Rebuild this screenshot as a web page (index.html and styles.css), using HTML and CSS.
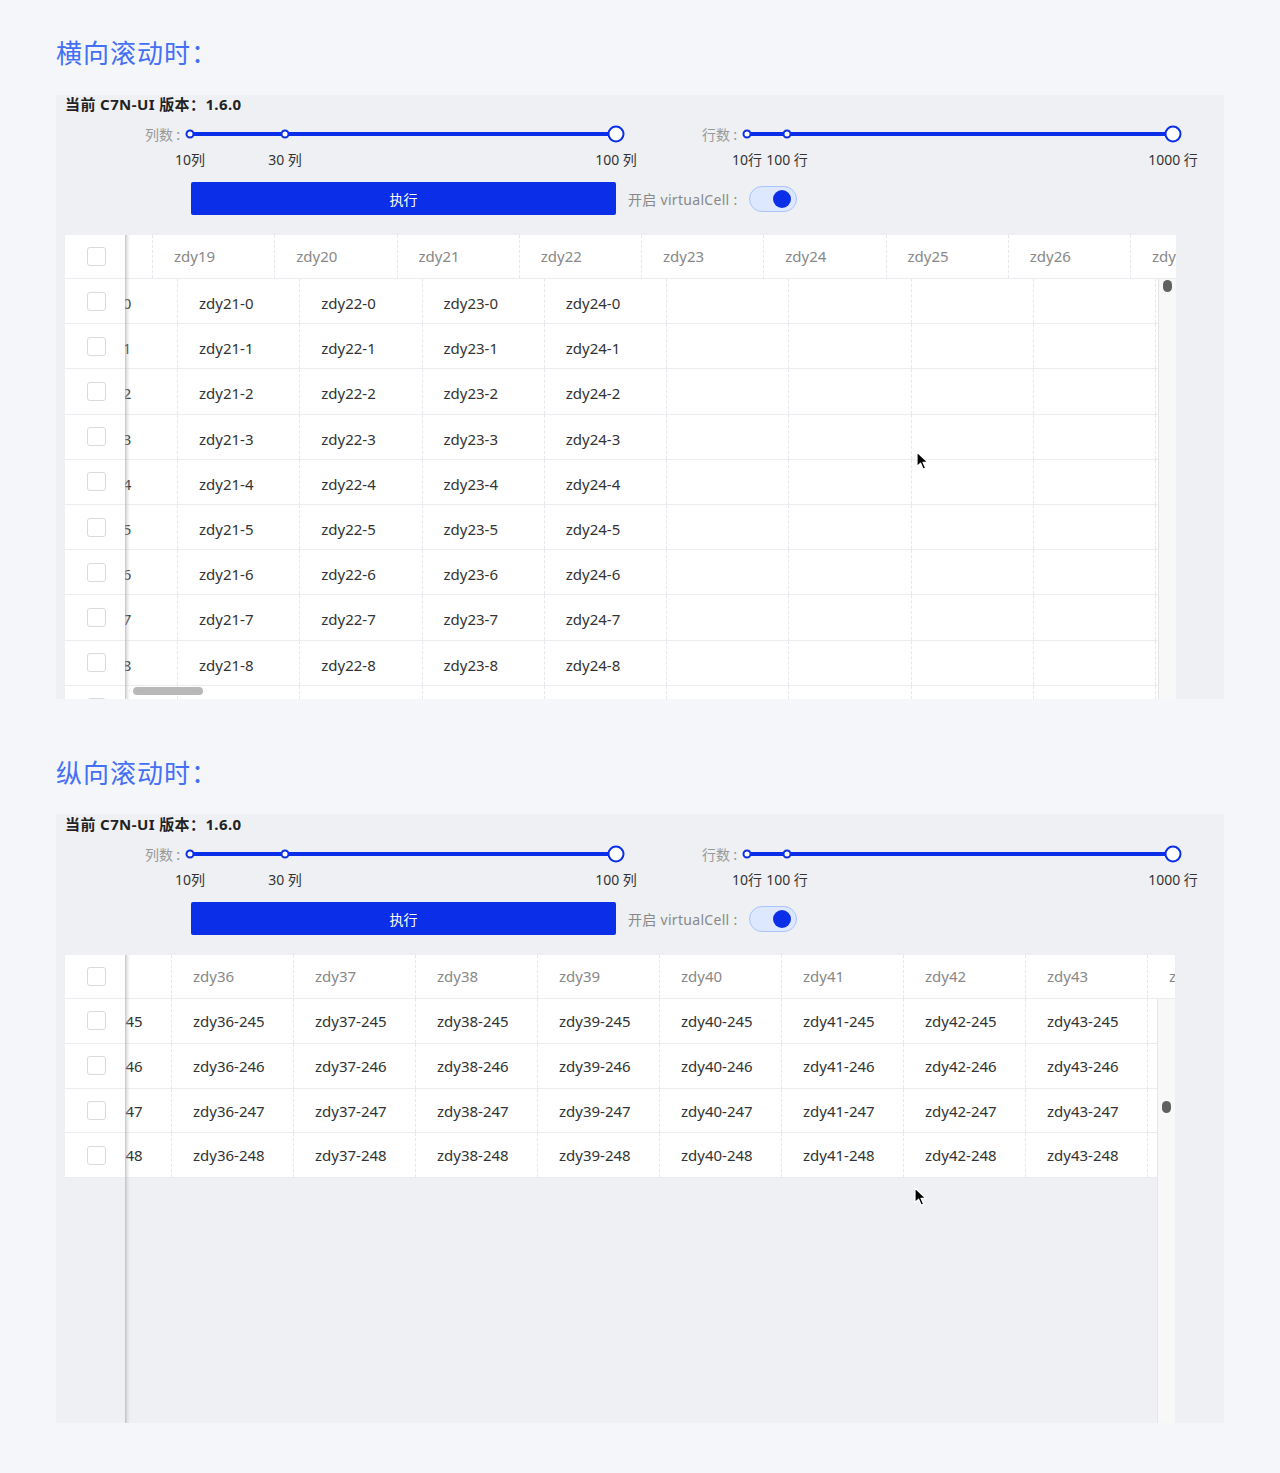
FILE: index.html
```html
<!DOCTYPE html>
<html lang="zh-CN">
<head>
<meta charset="utf-8">
<title>virtualCell</title>
<link rel="stylesheet" href="styles.css">
</head>
<body>
<div class="page">
  <h2 class="title">横向滚动时：</h2>
  <div class="panel p1">
    <div class="version">当前 C7N-UI 版本：1.6.0</div>
    <div class="sliders">
      <div class="sgroup">
        <span class="slabel">列数 :</span>
        <div class="track">
          <div class="line"></div>
          <span class="dot d-c0"></span><span class="dot d-c1"></span><span class="dot big d-end"></span>
          <span class="mark d-c0">10列</span><span class="mark d-c1">30 列</span><span class="mark d-end">100 列</span>
        </div>
      </div>
      <div class="sgroup sg2">
        <span class="slabel">行数 :</span>
        <div class="track">
          <div class="line"></div>
          <span class="dot d-r0"></span><span class="dot d-r1"></span><span class="dot big d-end"></span>
          <span class="mark d-r0">10行</span><span class="mark d-r1">100 行</span><span class="mark d-end">1000 行</span>
        </div>
      </div>
    </div>
    <div class="actions">
      <button class="run">执行</button>
      <span class="vc-label">开启 virtualCell :</span>
      <span class="switch"><span class="knob"></span></span>
    </div>
    <div class="table t1">
      <div class="fixed">
        <div class="fh"><span class="cb"></span></div>
        <div class="fr"><span class="cb"></span></div>
        <div class="fr"><span class="cb"></span></div>
        <div class="fr"><span class="cb"></span></div>
        <div class="fr"><span class="cb"></span></div>
        <div class="fr"><span class="cb"></span></div>
        <div class="fr"><span class="cb"></span></div>
        <div class="fr"><span class="cb"></span></div>
        <div class="fr"><span class="cb"></span></div>
        <div class="fr"><span class="cb"></span></div>
        <div class="fr"><span class="cb"></span></div>
      </div>
      <div class="scroll">
        <div class="head">
          <div class="head-inner off-h1">
            <div class="hc">zdy18</div><div class="hc">zdy19</div><div class="hc">zdy20</div><div class="hc">zdy21</div><div class="hc">zdy22</div><div class="hc">zdy23</div><div class="hc">zdy24</div><div class="hc">zdy25</div><div class="hc">zdy26</div><div class="hc">zdy27</div>
          </div>
        </div>
        <div class="bodywrap">
          <div class="rows">
            <div class="row"><div class="row-inner off-b1"><div class="bc">zdy20-0</div><div class="bc">zdy21-0</div><div class="bc">zdy22-0</div><div class="bc">zdy23-0</div><div class="bc">zdy24-0</div><div class="bc"></div><div class="bc"></div><div class="bc"></div><div class="bc"></div></div></div>
            <div class="row"><div class="row-inner off-b1"><div class="bc">zdy20-1</div><div class="bc">zdy21-1</div><div class="bc">zdy22-1</div><div class="bc">zdy23-1</div><div class="bc">zdy24-1</div><div class="bc"></div><div class="bc"></div><div class="bc"></div><div class="bc"></div></div></div>
            <div class="row"><div class="row-inner off-b1"><div class="bc">zdy20-2</div><div class="bc">zdy21-2</div><div class="bc">zdy22-2</div><div class="bc">zdy23-2</div><div class="bc">zdy24-2</div><div class="bc"></div><div class="bc"></div><div class="bc"></div><div class="bc"></div></div></div>
            <div class="row"><div class="row-inner off-b1"><div class="bc">zdy20-3</div><div class="bc">zdy21-3</div><div class="bc">zdy22-3</div><div class="bc">zdy23-3</div><div class="bc">zdy24-3</div><div class="bc"></div><div class="bc"></div><div class="bc"></div><div class="bc"></div></div></div>
            <div class="row"><div class="row-inner off-b1"><div class="bc">zdy20-4</div><div class="bc">zdy21-4</div><div class="bc">zdy22-4</div><div class="bc">zdy23-4</div><div class="bc">zdy24-4</div><div class="bc"></div><div class="bc"></div><div class="bc"></div><div class="bc"></div></div></div>
            <div class="row"><div class="row-inner off-b1"><div class="bc">zdy20-5</div><div class="bc">zdy21-5</div><div class="bc">zdy22-5</div><div class="bc">zdy23-5</div><div class="bc">zdy24-5</div><div class="bc"></div><div class="bc"></div><div class="bc"></div><div class="bc"></div></div></div>
            <div class="row"><div class="row-inner off-b1"><div class="bc">zdy20-6</div><div class="bc">zdy21-6</div><div class="bc">zdy22-6</div><div class="bc">zdy23-6</div><div class="bc">zdy24-6</div><div class="bc"></div><div class="bc"></div><div class="bc"></div><div class="bc"></div></div></div>
            <div class="row"><div class="row-inner off-b1"><div class="bc">zdy20-7</div><div class="bc">zdy21-7</div><div class="bc">zdy22-7</div><div class="bc">zdy23-7</div><div class="bc">zdy24-7</div><div class="bc"></div><div class="bc"></div><div class="bc"></div><div class="bc"></div></div></div>
            <div class="row"><div class="row-inner off-b1"><div class="bc">zdy20-8</div><div class="bc">zdy21-8</div><div class="bc">zdy22-8</div><div class="bc">zdy23-8</div><div class="bc">zdy24-8</div><div class="bc"></div><div class="bc"></div><div class="bc"></div><div class="bc"></div></div></div>
            <div class="row"><div class="row-inner off-b1"><div class="bc"></div><div class="bc"></div><div class="bc"></div><div class="bc"></div><div class="bc"></div><div class="bc"></div><div class="bc"></div><div class="bc"></div><div class="bc"></div></div></div>
            <span class="hthumb"></span>
          </div>
          <div class="vbar"><span class="vthumb th1"></span></div>
        </div>
      </div>
    </div>
    <svg class="cursor c1" width="14" height="20" viewBox="0 0 14 20"><path d="M1 1 L1 15.5 L4.6 12.2 L7.2 18.2 L9.6 17.1 L7 11.3 L11.8 11.3 Z" fill="#000" stroke="#fff" stroke-width="1.2" stroke-linejoin="round"/></svg>
  </div>

  <h2 class="title t2">纵向滚动时：</h2>
  <div class="panel p2">
    <div class="version">当前 C7N-UI 版本：1.6.0</div>
    <div class="sliders">
      <div class="sgroup">
        <span class="slabel">列数 :</span>
        <div class="track">
          <div class="line"></div>
          <span class="dot d-c0"></span><span class="dot d-c1"></span><span class="dot big d-end"></span>
          <span class="mark d-c0">10列</span><span class="mark d-c1">30 列</span><span class="mark d-end">100 列</span>
        </div>
      </div>
      <div class="sgroup sg2">
        <span class="slabel">行数 :</span>
        <div class="track">
          <div class="line"></div>
          <span class="dot d-r0"></span><span class="dot d-r1"></span><span class="dot big d-end"></span>
          <span class="mark d-r0">10行</span><span class="mark d-r1">100 行</span><span class="mark d-end">1000 行</span>
        </div>
      </div>
    </div>
    <div class="actions">
      <button class="run">执行</button>
      <span class="vc-label">开启 virtualCell :</span>
      <span class="switch"><span class="knob"></span></span>
    </div>
    <div class="table t2">
      <div class="fixed">
        <div class="fh"><span class="cb"></span></div>
        <div class="fr"><span class="cb"></span></div>
        <div class="fr"><span class="cb"></span></div>
        <div class="fr"><span class="cb"></span></div>
        <div class="fr"><span class="cb"></span></div>
      </div>
      <div class="scroll">
        <div class="head">
          <div class="head-inner off-2">
            <div class="hc">zdy35</div><div class="hc">zdy36</div><div class="hc">zdy37</div><div class="hc">zdy38</div><div class="hc">zdy39</div><div class="hc">zdy40</div><div class="hc">zdy41</div><div class="hc">zdy42</div><div class="hc">zdy43</div><div class="hc">zdy44</div>
          </div>
        </div>
        <div class="bodywrap">
          <div class="rows">
            <div class="row"><div class="row-inner off-2"><div class="bc">zdy35-245</div><div class="bc">zdy36-245</div><div class="bc">zdy37-245</div><div class="bc">zdy38-245</div><div class="bc">zdy39-245</div><div class="bc">zdy40-245</div><div class="bc">zdy41-245</div><div class="bc">zdy42-245</div><div class="bc">zdy43-245</div><div class="bc"></div></div></div>
            <div class="row"><div class="row-inner off-2"><div class="bc">zdy35-246</div><div class="bc">zdy36-246</div><div class="bc">zdy37-246</div><div class="bc">zdy38-246</div><div class="bc">zdy39-246</div><div class="bc">zdy40-246</div><div class="bc">zdy41-246</div><div class="bc">zdy42-246</div><div class="bc">zdy43-246</div><div class="bc"></div></div></div>
            <div class="row"><div class="row-inner off-2"><div class="bc">zdy35-247</div><div class="bc">zdy36-247</div><div class="bc">zdy37-247</div><div class="bc">zdy38-247</div><div class="bc">zdy39-247</div><div class="bc">zdy40-247</div><div class="bc">zdy41-247</div><div class="bc">zdy42-247</div><div class="bc">zdy43-247</div><div class="bc"></div></div></div>
            <div class="row"><div class="row-inner off-2"><div class="bc">zdy35-248</div><div class="bc">zdy36-248</div><div class="bc">zdy37-248</div><div class="bc">zdy38-248</div><div class="bc">zdy39-248</div><div class="bc">zdy40-248</div><div class="bc">zdy41-248</div><div class="bc">zdy42-248</div><div class="bc">zdy43-248</div><div class="bc"></div></div></div>
          </div>
          <div class="vbar"><span class="vthumb th2"></span></div>
        </div>
      </div>
    </div>
    <svg class="cursor c2" width="14" height="20" viewBox="0 0 14 20"><path d="M1 1 L1 15.5 L4.6 12.2 L7.2 18.2 L9.6 17.1 L7 11.3 L11.8 11.3 Z" fill="#000" stroke="#fff" stroke-width="1.2" stroke-linejoin="round"/></svg>
  </div>
</div>
</body>
</html>
```

FILE: styles.css
```css
* { box-sizing: border-box; }
body {
  margin: 0;
  background: #f5f6fa;
  font-family: "Noto Sans", "Noto Sans CJK SC", sans-serif;
  font-size: 14px;
  color: #333;
}
.page { padding: 34px 0 50px 56px; width: 1280px; }
.title {
  margin: 0 0 25px;
  font-size: 26px;
  line-height: 36px;
  font-weight: 400;
  letter-spacing: 1px;
  color: #4470f4;
  font-family: "Noto Sans CJK SC", sans-serif;
}
.title.t2 { margin-top: 55px; margin-bottom: 24px; }
.panel {
  position: relative;
  width: 1168px;
  background: #eef0f3;
  padding-left: 9px;
  overflow: hidden;
  display: flex;
  flex-direction: column;
}
.p1 { height: 604px; }
.p2 { height: 609px; }
.version {
  font-weight: 700;
  line-height: 18px;
  color: #222;
  font-size: 15px;
  letter-spacing: 0.4px;
}
.p2 .version { margin-top: 1px; }
.sliders {
  display: flex;
  margin-top: 11px;
  padding-left: 80px;
  height: 20px;
  flex: none;
}
.sgroup { display: flex; align-items: center; }
.sg2 { margin-left: 86px; }
.slabel { width: 45px; color: #999; line-height: 20px; font-family: "Noto Sans CJK SC", sans-serif; }
.track { position: relative; width: 426px; height: 20px; }
.line { height: 4px; margin-top: 8px; background: #0b2fe8; border-radius: 2px; }
.dot {
  position: absolute;
  top: 10px;
  width: 9px;
  height: 9px;
  border: 2px solid #0b2fe8;
  background: #fff;
  border-radius: 50%;
  transform: translate(-50%, -50%);
}
.dot.big { width: 17px; height: 17px; border-width: 2.5px; }
.mark {
  position: absolute;
  top: 26px;
  transform: translateX(-50%);
  line-height: 20px;
  white-space: nowrap;
  color: #333;
}
.d-c0, .d-r0 { left: 0; }
.d-c1 { left: 95px; }
.d-r1 { left: 40px; }
.d-end { left: 426px; }
.actions {
  display: flex;
  align-items: center;
  margin-top: 38px;
  padding-left: 126px;
  height: 33px;
  flex: none;
}
.run {
  width: 425px;
  height: 33px;
  border: 0;
  border-radius: 2px;
  background: #0b2fe8;
  color: #fff;
  font: inherit;
  font-size: 14px;
  padding: 0;
}
.vc-label { margin-left: 12px; color: #888; letter-spacing: 0.3px; }
.switch {
  margin-left: 12px;
  width: 48px;
  height: 26px;
  border-radius: 13px;
  border: 1px solid #a9c3fb;
  background: #dde8ff;
  display: flex;
  align-items: center;
  justify-content: flex-end;
  padding-right: 5px;
}
.knob { width: 18px; height: 18px; border-radius: 50%; background: #0b2fe8; }

.table {
  margin-top: 20px;
  flex: 1;
  min-height: 0;
  display: flex;
  width: 1111px;
}
.t2 { width: 1110px; }
.fixed { position: relative; z-index: 2; width: 60px; flex: none; }
.fixed::after {
  content: "";
  position: absolute;
  top: 0;
  bottom: 0;
  right: -6px;
  width: 6px;
  background: linear-gradient(to right, rgba(170,170,175,0.7) 0, rgba(190,190,195,0.35) 35%, rgba(220,220,225,0.1) 75%, rgba(230,230,235,0));
}
.fh, .fr {
  display: flex;
  align-items: center;
  justify-content: center;
  background: #fff;
  border-bottom: 1px solid #ececf0;
  padding-left: 2px;
}
.fh { height: 44px; }
.fr { height: 45.2px; }
.t2 .fr { height: 44.8px; }
.cb {
  width: 19px;
  height: 19px;
  border: 1px solid #dadade;
  border-radius: 3px;
  background: #fff;
}
.scroll {
  flex: 1;
  min-width: 0;
  overflow: hidden;
  display: flex;
  flex-direction: column;
}
.head {
  height: 44px;
  flex: none;
  background: #fff;
  border-bottom: 1px solid #ececf0;
  overflow: hidden;
}
.head-inner, .row-inner { display: flex; height: 100%; }
.off-h1 { margin-left: -94.25px; }
.off-b1 { margin-left: -69.25px; }
.off-2 { margin-left: -75px; }
.hc, .bc {
  flex: none;
  width: 122.25px;
  padding-left: 21px;
  border-right: 1px dashed #e6e6ec;
  white-space: nowrap;
  overflow: hidden;
  font-size: 15px;
}
.t2 .hc, .t2 .bc { width: 122px; }
.hc { line-height: 43px; color: #888; }
.bc { line-height: 48px; color: #333; }
.t2 .bc { line-height: 44px; }
.bodywrap { flex: 1; display: flex; min-height: 0; }
.rows { position: relative; flex: 1; min-width: 0; overflow: hidden; }
.row {
  height: 45.2px;
  background: #fff;
  border-bottom: 1px solid #ececf0;
  overflow: hidden;
}
.t2 .row { height: 44.8px; }
.vbar {
  width: 18px;
  flex: none;
  background: #f8f8f9;
  border-left: 1px solid #e6e6ea;
  display: flex;
  flex-direction: column;
  align-items: center;
}
.vthumb { width: 9px; height: 12px; border-radius: 5px; background: #606060; }
.th1 { margin-top: 1px; }
.th2 { margin-top: 102px; }
.hthumb {
  position: absolute;
  left: 8px;
  bottom: 4px;
  width: 70px;
  height: 8px;
  border-radius: 4px;
  background: #b8b8b8;
}
.cursor { position: absolute; z-index: 5; }
.c1 { left: 860px; top: 356px; }
.c2 { left: 858px; top: 373px; }
```
